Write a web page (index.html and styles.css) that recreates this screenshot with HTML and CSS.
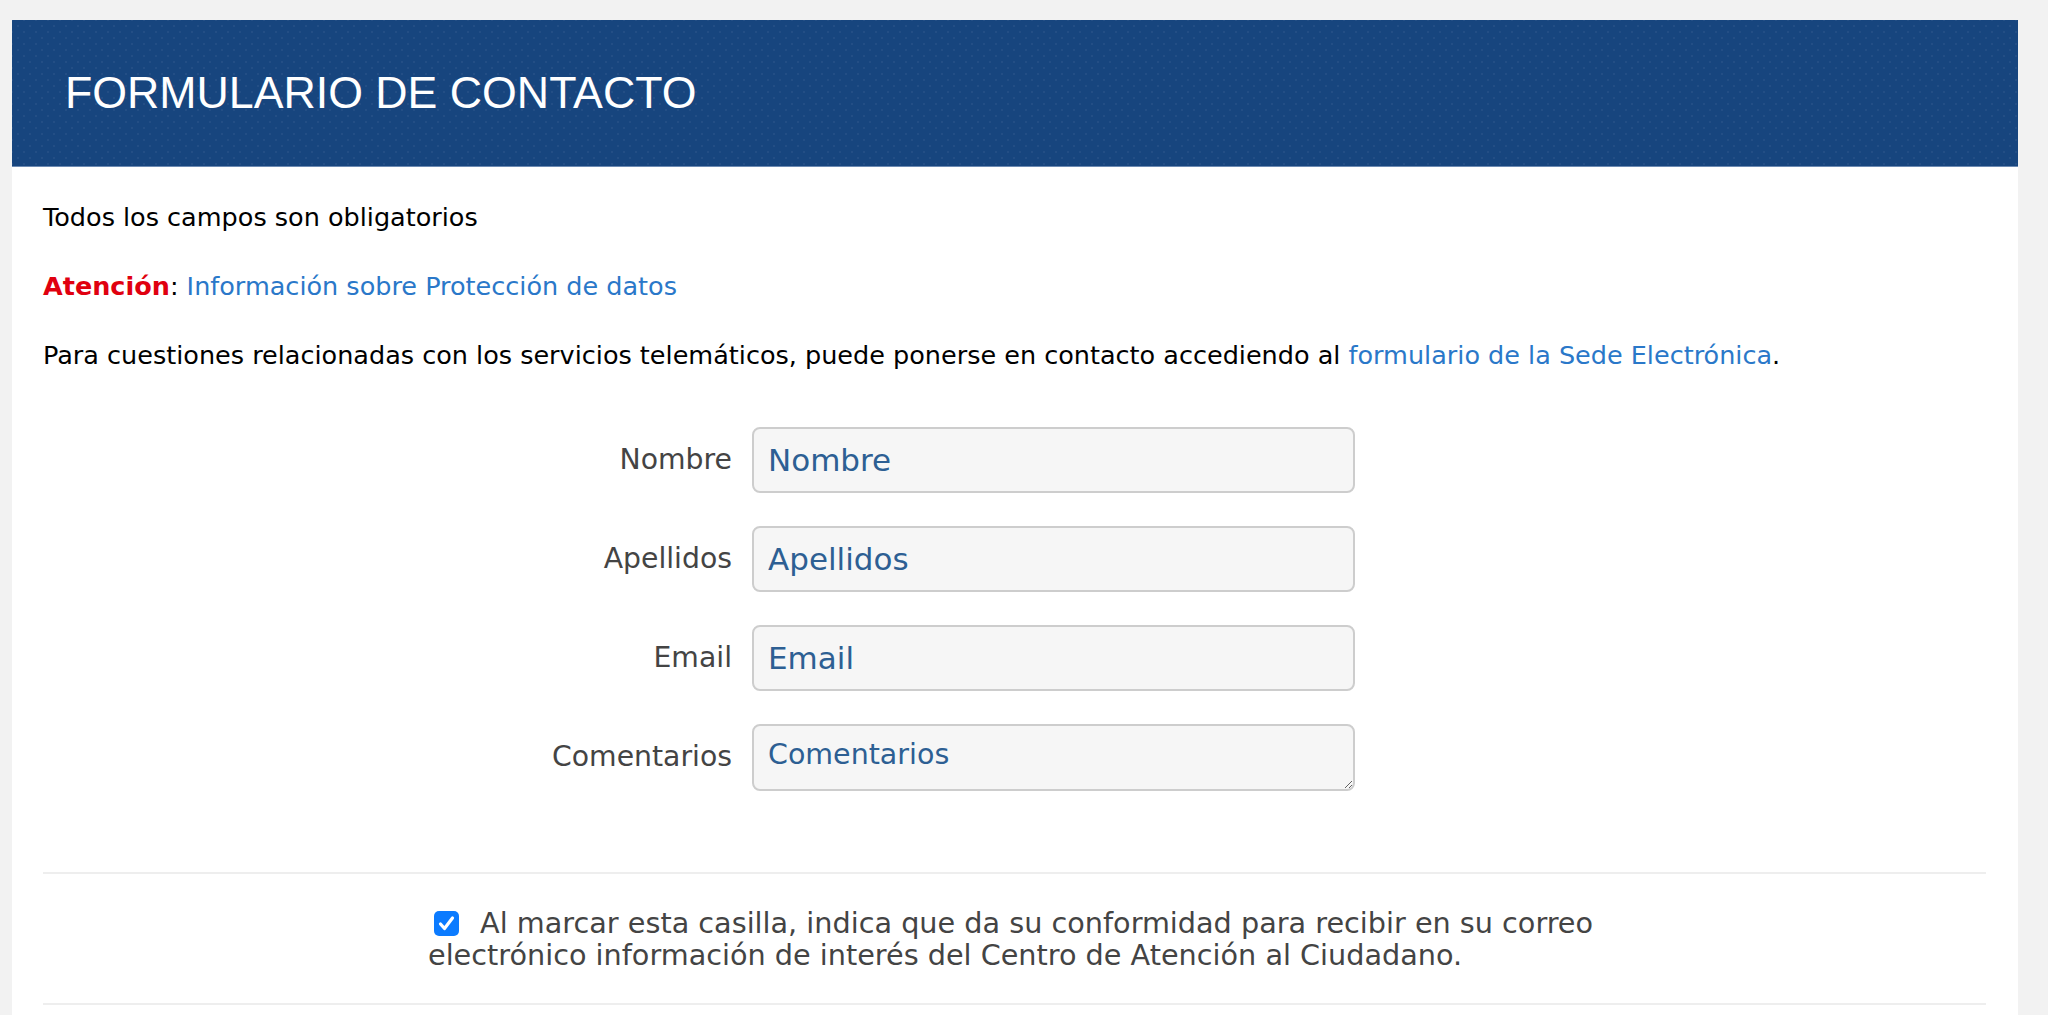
FILE: index.html
```html
<!DOCTYPE html>
<html lang="es">
<head>
    <meta charset="UTF-8">
    <meta name="viewport" content="width=device-width, initial-scale=1.0">
    <title>Formulario de contacto</title>
    <link rel="stylesheet" href="styles.css">
</head>
<body>
    <div class="panel">
        <div class="panel-heading">
            <h1>FORMULARIO DE CONTACTO</h1>
        </div>

        <div class="panel-body">
            <p>Todos los campos son obligatorios</p>
            <p><strong class="alert">Atención</strong>: <a href="#" class="link">Información sobre Protección de datos</a></p>
            <p>Para cuestiones relacionadas con los servicios telemáticos, puede ponerse en contacto accediendo al <a href="#" class="link">formulario de la Sede Electrónica</a>.</p>

            <form class="contact-form">
                <div class="form-row">
                    <label for="nombre">Nombre</label>
                    <input type="text" id="nombre" class="input" placeholder="Nombre">
                </div>
                <div class="form-row">
                    <label for="apellidos">Apellidos</label>
                    <input type="text" id="apellidos" class="input" placeholder="Apellidos">
                </div>
                <div class="form-row">
                    <label for="email">Email</label>
                    <input type="email" id="email" class="input" placeholder="Email">
                </div>
                <div class="form-row">
                    <label for="comentarios">Comentarios</label>
                    <textarea id="comentarios" class="input textarea" placeholder="Comentarios"></textarea>
                </div>

                <div class="consent">
                    <label class="consent-label">
                        <span class="check">
                            <svg viewBox="0 0 25 25" width="25" height="25">
                                <rect x="0" y="0" width="25" height="25" rx="5" fill="#0b7bff"/>
                                <path d="M6.5 13 L10.5 17.5 L18.5 7" fill="none" stroke="#fff" stroke-width="3.2" stroke-linecap="round" stroke-linejoin="round"/>
                            </svg>
                        </span>
                        Al marcar esta casilla, indica que da su conformidad para recibir en su correo electrónico información de interés del Centro de Atención al Ciudadano.
                    </label>
                </div>
            </form>
        </div>
    </div>
</body>
</html>
```

FILE: styles.css
```css
body {
    margin: 20px 30px 0 12px;
    padding: 0;
    background-color: #f2f2f2;
    font-family: "DejaVu Sans", Verdana, sans-serif;
}
.panel {
    background-color: #fff;
    min-height: 1100px;
}
.panel-heading {
    height: 147px;
    box-sizing: border-box;
    padding: 51px 0 0 53px;
    background-color: #17457e;
    background-image:
        radial-gradient(rgba(255, 255, 255, 0.05) 1px, transparent 1.5px),
        radial-gradient(rgba(255, 255, 255, 0.05) 1px, transparent 1.5px);
    background-size: 12px 12px;
    background-position: 0 0, 6px 6px;
    border-bottom: 1px solid #6c8ab2;
}
.panel-heading h1 {
    margin: 0;
    font-family: "Liberation Sans", Arial, sans-serif;
    font-size: 44.7px;
    font-weight: normal;
    line-height: 44px;
    color: #fff;
}
.panel-body {
    padding: 32px 32px 0 31px;
}
.panel-body p {
    margin: 0 0 33px;
    font-size: 25.5px;
    line-height: 36px;
    color: #000;
}
.alert {
    color: #e0000f;
}
.link {
    color: #2a78c9;
    text-decoration: none;
}
.contact-form {
    padding-top: 21px;
}
.form-row {
    display: grid;
    grid-template-columns: 689px 603px;
    column-gap: 20px;
    margin-bottom: 33px;
}
.form-row label {
    text-align: right;
    font-size: 28.3px;
    line-height: 66px;
    color: #444;
}
.input {
    box-sizing: border-box;
    height: 66px;
    margin: 0;
    padding: 0 14px;
    font-family: "DejaVu Sans", Verdana, sans-serif;
    font-size: 31px;
    color: #2d5f93;
    background-color: #f6f6f6;
    border: 2px solid #cdcdcd;
    border-radius: 8px;
    outline: none;
}
.input::placeholder {
    color: #2d5f93;
    opacity: 1;
}
.textarea {
    height: 67px;
    padding-top: 11px;
    font-size: 28.5px;
    line-height: 36px;
    resize: both;
}
.consent {
    margin-top: 81px;
    padding: 33px 0 32px 385px;
    border-top: 2px solid #eee;
    border-bottom: 2px solid #eee;
}
.consent-label {
    display: block;
    width: 1200px;
    font-size: 28.7px;
    line-height: 32px;
    color: #444;
}
.check {
    display: inline-block;
    width: 25px;
    height: 25px;
    margin: 0 12px 0 6px;
    vertical-align: -3px;
}
.check svg {
    display: block;
}
```
